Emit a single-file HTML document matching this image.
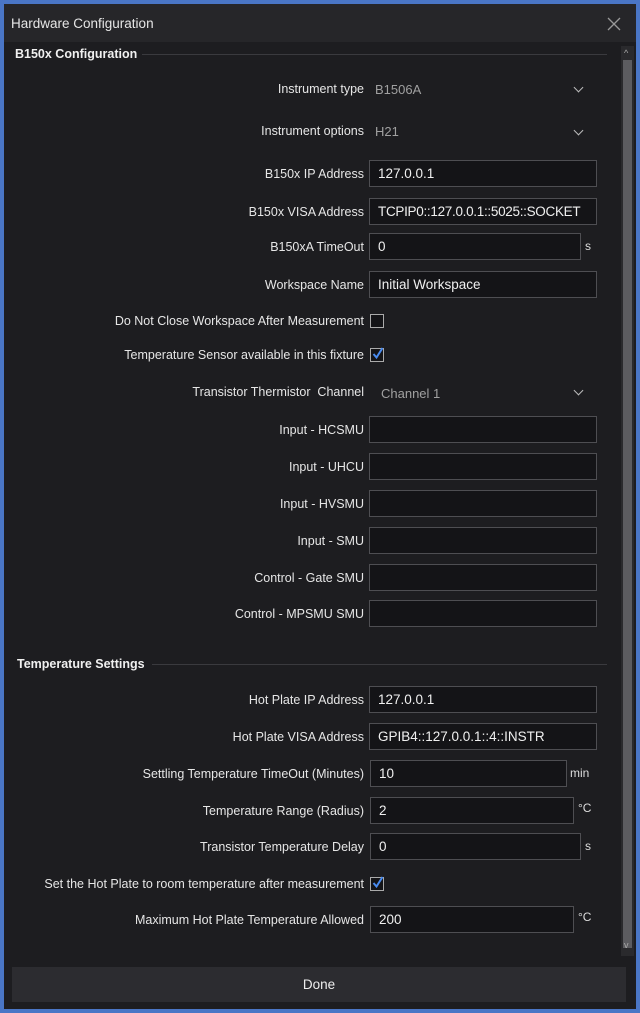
<!DOCTYPE html>
<html><head><style>
html,body{margin:0;padding:0;width:640px;height:1013px;overflow:hidden;background:#4a76c6;font-family:"Liberation Sans",sans-serif;}
#d{position:absolute;left:4px;top:4px;width:632px;height:1005px;background:#1d1d20;}
#tb{position:absolute;left:4px;top:4px;width:632px;height:38px;background:#262629;}
.t{position:absolute;color:#e6e6e6;font-size:13px;white-space:nowrap;line-height:16px;}
.l{position:absolute;right:276px;color:#e6e6e6;font-size:12.5px;white-space:nowrap;line-height:16px;}
.h{position:absolute;color:#f0f0f0;font-size:12.5px;font-weight:bold;}
.in{position:absolute;left:369px;height:25px;background:#141417;border:1px solid #4e4e52;box-sizing:content-box;color:#f0f0f0;font-size:13.5px;line-height:25px;padding-left:8px;white-space:nowrap;overflow:hidden;}
.dd{position:absolute;left:375px;color:#a0a0a0;font-size:13px;}
.cv{position:absolute;left:575px;width:6px;height:6px;border-right:1.5px solid #bbb;border-bottom:1.5px solid #bbb;transform:rotate(45deg);}
.cb{position:absolute;left:370px;width:12px;height:12px;border:1px solid #aaa;background:#141417;}
.u{position:absolute;color:#ddd;font-size:12px;}
.line{position:absolute;height:1px;background:#3a3a3e;}
</style></head><body>
<div id="d"></div>
<div id="tb"></div>
<div class="t" style="left:11px;top:16px;font-size:13.5px;">Hardware Configuration</div>
<svg style="position:absolute;left:607px;top:17px" width="14" height="14"><path d="M1 1L13 13M13 1L1 13" stroke="#999" stroke-width="1.3"/></svg>
<div style="position:absolute;left:621px;top:46px;width:13px;height:910px;background:#2a2a2d"></div>
<div style="position:absolute;left:623px;top:60px;width:9px;height:888px;background:#5c5c60"></div>
<div style="position:absolute;left:624px;top:48px;color:#aaa;font-size:9px">^</div>
<div style="position:absolute;left:624px;top:940px;color:#aaa;font-size:9px">v</div>

<div class="h" style="left:15px;top:47px">B150x Configuration</div>
<div class="line" style="left:142px;top:54px;width:465px"></div>

<div class="l" style="top:81px">Instrument type</div><div class="dd" style="top:82px">B1506A</div><div class="cv" style="top:84px"></div>
<div class="l" style="top:123px">Instrument options</div><div class="dd" style="top:124px">H21</div><div class="cv" style="top:127px"></div>
<div class="l" style="top:166px">B150x IP Address</div><div class="in" style="top:160px;width:218px">127.0.0.1</div>
<div class="l" style="top:204px">B150x VISA Address</div><div class="in" style="top:198px;width:218px;letter-spacing:-0.3px">TCPIP0::127.0.0.1::5025::SOCKET</div>
<div class="l" style="top:239px">B150xA TimeOut</div><div class="in" style="top:233px;width:202px">0</div><div class="u" style="left:585px;top:239px">s</div>
<div class="l" style="top:277px">Workspace Name</div><div class="in" style="top:271px;width:218px">Initial Workspace</div>
<div class="l" style="top:313px">Do Not Close Workspace After Measurement</div><div class="cb" style="top:314px"></div>
<div class="l" style="top:347px">Temperature Sensor available in this fixture</div><div class="cb" style="top:348px"></div>
<svg style="position:absolute;left:372px;top:347px" width="12" height="13"><path d="M1.5 7L4.5 10.5L10.5 1" stroke="#4a8cf0" stroke-width="2" fill="none"/></svg>
<div class="l" style="top:384px">Transistor Thermistor&nbsp; Channel</div><div class="dd" style="top:386px;left:381px">Channel 1</div><div class="cv" style="top:387px"></div>
<div class="l" style="top:422px">Input - HCSMU</div><div class="in" style="top:416px;width:218px"></div>
<div class="l" style="top:459px">Input - UHCU</div><div class="in" style="top:453px;width:218px"></div>
<div class="l" style="top:496px">Input - HVSMU</div><div class="in" style="top:490px;width:218px"></div>
<div class="l" style="top:533px">Input - SMU</div><div class="in" style="top:527px;width:218px"></div>
<div class="l" style="top:570px">Control - Gate SMU</div><div class="in" style="top:564px;width:218px"></div>
<div class="l" style="top:606px">Control - MPSMU SMU</div><div class="in" style="top:600px;width:218px"></div>

<div class="h" style="left:17px;top:657px">Temperature Settings</div>
<div class="line" style="left:152px;top:664px;width:455px"></div>

<div class="l" style="top:692px">Hot Plate IP Address</div><div class="in" style="top:686px;width:218px">127.0.0.1</div>
<div class="l" style="top:729px">Hot Plate VISA Address</div><div class="in" style="top:723px;width:218px">GPIB4::127.0.0.1::4::INSTR</div>
<div class="l" style="top:766px">Settling Temperature TimeOut (Minutes)</div><div class="in" style="top:760px;width:187px;left:370px">10</div><div class="u" style="left:570px;top:766px">min</div>
<div class="l" style="top:803px">Temperature Range (Radius)</div><div class="in" style="top:797px;width:194px;left:370px">2</div><div class="u" style="left:578px;top:801px">°C</div>
<div class="l" style="top:839px">Transistor Temperature Delay</div><div class="in" style="top:833px;width:201px;left:370px">0</div><div class="u" style="left:585px;top:839px">s</div>
<div class="l" style="top:876px">Set the Hot Plate to room temperature after measurement</div><div class="cb" style="top:877px"></div>
<svg style="position:absolute;left:372px;top:876px" width="12" height="13"><path d="M1.5 7L4.5 10.5L10.5 1" stroke="#4a8cf0" stroke-width="2" fill="none"/></svg>
<div class="l" style="top:912px">Maximum Hot Plate Temperature Allowed</div><div class="in" style="top:906px;width:194px;left:370px">200</div><div class="u" style="left:578px;top:910px">°C</div>

<div style="position:absolute;left:12px;top:967px;width:614px;height:35px;background:#2c2c30;color:#eee;font-size:13.5px;text-align:center;line-height:35px">Done</div>
</body></html>
